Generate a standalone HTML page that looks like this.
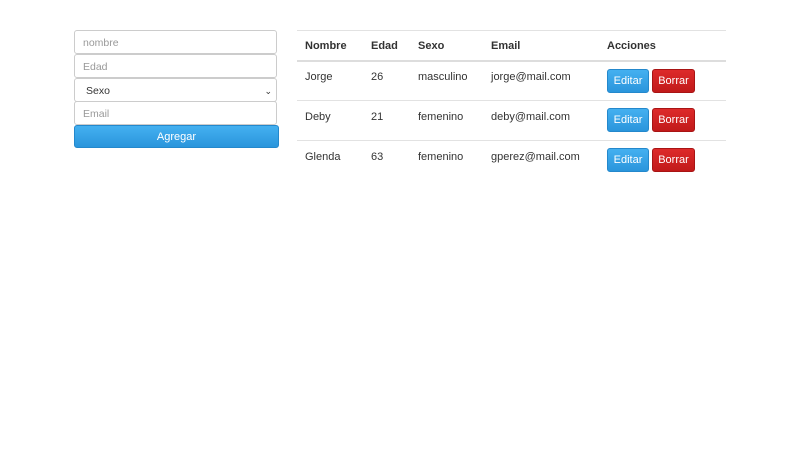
<!DOCTYPE html>
<html><head><style>
body{margin:0;width:800px;height:450px;background:#fff;font-family:"Liberation Sans",sans-serif;font-size:11px;color:#333;position:relative}
.in{position:absolute;left:74px;width:203px;border:1px solid #ccc;border-radius:3px;box-sizing:border-box;color:#999;padding-left:8px;font-size:10.5px}
.btn{position:absolute;box-sizing:border-box;border-radius:3px;color:#fff;text-align:center;font-size:11px}
.blue{background:linear-gradient(#44b0f0,#2a95dc);border:1px solid #2488cc}
.red{background:linear-gradient(#dd2a2a,#c11a1a);border:1px solid #a81414}
.line{position:absolute;left:297px;width:429px;height:1px;background:#e2e2e2}
.t{position:absolute}
b{position:absolute;color:#333}
</style></head><body>
<div class="in" style="top:30px;height:24px;line-height:24px">nombre</div>
<div class="in" style="top:54px;height:24px;line-height:24px">Edad</div>
<div class="in" style="top:78px;height:24px;line-height:24px;color:#333;padding-left:11px">Sexo<span style="position:absolute;right:4px;font-size:9px">&#8964;</span></div>
<div class="in" style="top:101px;height:24px;line-height:24px">Email</div>
<div class="btn blue" style="left:74px;top:125px;width:205px;height:23px;line-height:22px">Agregar</div>

<div class="line" style="top:30px"></div>
<div class="line" style="top:60px;height:2px;background:#ddd"></div>
<div class="line" style="top:100px"></div>
<div class="line" style="top:140px"></div>
<b style="left:305px;top:40px">Nombre</b><b style="left:371px;top:40px">Edad</b><b style="left:418px;top:40px">Sexo</b><b style="left:491px;top:40px">Email</b><b style="left:607px;top:40px">Acciones</b>

<div class="t" style="left:305px;top:71px">Jorge</div><div class="t" style="left:371px;top:71px">26</div><div class="t" style="left:418px;top:71px">masculino</div><div class="t" style="left:491px;top:71px">jorge@mail.com</div>
<div class="t" style="left:305px;top:111px">Deby</div><div class="t" style="left:371px;top:111px">21</div><div class="t" style="left:418px;top:111px">femenino</div><div class="t" style="left:491px;top:111px">deby@mail.com</div>
<div class="t" style="left:305px;top:151px">Glenda</div><div class="t" style="left:371px;top:151px">63</div><div class="t" style="left:418px;top:151px">femenino</div><div class="t" style="left:491px;top:151px">gperez@mail.com</div>

<div class="btn blue" style="left:607px;top:69px;width:42px;height:24px;line-height:23px">Editar</div>
<div class="btn red" style="left:652px;top:69px;width:43px;height:24px;line-height:23px">Borrar</div>
<div class="btn blue" style="left:607px;top:108px;width:42px;height:24px;line-height:23px">Editar</div>
<div class="btn red" style="left:652px;top:108px;width:43px;height:24px;line-height:23px">Borrar</div>
<div class="btn blue" style="left:607px;top:148px;width:42px;height:24px;line-height:23px">Editar</div>
<div class="btn red" style="left:652px;top:148px;width:43px;height:24px;line-height:23px">Borrar</div>
</body></html>
